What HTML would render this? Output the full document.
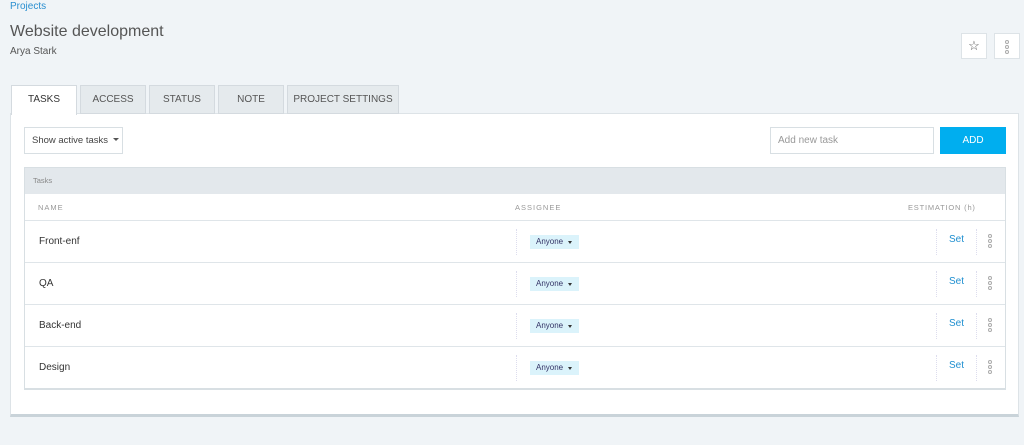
<!DOCTYPE html>
<html><head><style>
*{box-sizing:border-box;margin:0;padding:0}
body{width:1024px;height:445px;background:#f0f4f7;font-family:"Liberation Sans",sans-serif;position:relative;overflow:hidden;color:#444}
.a{position:absolute;white-space:nowrap}
.tab{position:absolute;top:85px;height:29px;background:#e5eaed;border:1px solid #d4dadf;font-size:10px;color:#555;text-align:center;line-height:28px;white-space:nowrap}
.row{position:absolute;left:24px;width:982px;height:42px;border-top:1px solid #dfe5e9;background:#fff}
.row .n{position:absolute;left:14px;top:15px;font-size:10px;color:#333}
.row .d1{position:absolute;left:491px;top:8px;height:26px;border-left:1px dotted #dde}
.row .d2{position:absolute;left:911px;top:8px;height:26px;border-left:1px dotted #dde}
.row .d3{position:absolute;left:951px;top:8px;height:26px;border-left:1px dotted #dde}
.pill{position:absolute;left:505px;top:14px;width:49px;height:14px;background:#dbf3fb;font-size:8px;color:#336;line-height:14px;padding-left:6px}
.pill:after{content:"";position:absolute;right:7px;top:6px;border:2.5px solid transparent;border-top:3px solid #333}
.set{position:absolute;left:924px;top:13px;font-size:10px;color:#1f8fd0}
.dots{position:absolute;left:963px;top:13px;width:4px}
.dots i{display:block;width:4px;height:4px;border:1px solid #aaa;border-radius:50%;margin-bottom:1px}
</style></head><body>
<div class="a" style="left:10px;top:1px;font-size:10px;color:#2a8fd0">Projects</div>
<div class="a" style="left:10px;top:23px;font-size:16px;color:#555">Website development</div>
<div class="a" style="left:10px;top:46px;font-size:10px;color:#555">Arya Stark</div>
<div class="a" style="left:961px;top:33px;width:26px;height:26px;background:#fff;border:1px solid #dde3e7;text-align:center;line-height:24px;font-size:13px;color:#555">☆</div>
<div class="a" style="left:994px;top:33px;width:26px;height:26px;background:#fff;border:1px solid #dde3e7"><div class="dots" style="left:10px;top:6px"><i></i><i></i><i></i></div></div>
<div class="a" style="left:10px;top:113px;width:1009px;height:304px;background:#fff;border:1px solid #dde3e7;border-bottom:3px solid #c9d3d9"></div>
<div class="tab" style="left:11px;width:66px;background:#fff;border-bottom:none;height:30px;color:#333">TASKS</div>
<div class="tab" style="left:80px;width:66px">ACCESS</div>
<div class="tab" style="left:149px;width:66px">STATUS</div>
<div class="tab" style="left:218px;width:66px">NOTE</div>
<div class="tab" style="left:287px;width:112px">PROJECT SETTINGS</div>
<div class="a" style="left:24px;top:127px;width:99px;height:27px;border:1px solid #d8dfe3;background:#fff;font-size:9.5px;color:#444;line-height:25px;padding-left:7px">Show active tasks <span style="display:inline-block;border:3px solid transparent;border-top:3.5px solid #555;vertical-align:-1px;margin-left:2px"></span></div>
<div class="a" style="left:770px;top:127px;width:164px;height:27px;border:1px solid #d8dfe3;background:#fff;font-size:10px;color:#999;line-height:25px;padding-left:7px">Add new task</div>
<div class="a" style="left:940px;top:127px;width:66px;height:27px;background:#00aeef;color:#fff;font-size:10px;text-align:center;line-height:27px">ADD</div>
<div class="a" style="left:24px;top:167px;width:982px;height:223px;border:1px solid #d8dfe3;border-bottom:2px solid #d8dfe3"></div>
<div class="a" style="left:25px;top:168px;width:980px;height:26px;background:#e3e8ec;font-size:7.5px;color:#888;line-height:26px;padding-left:8px">Tasks</div>
<div class="a" style="left:38px;top:203px;font-size:7.5px;color:#999;letter-spacing:1px">NAME</div>
<div class="a" style="left:515px;top:203px;font-size:7.5px;color:#999;letter-spacing:1px">ASSIGNEE</div>
<div class="a" style="left:908px;top:203px;font-size:7.5px;color:#999;letter-spacing:0.8px">ESTIMATION (h)</div>
<div class="row" style="top:220px;left:25px;width:980px"><div class="n">Front-enf</div><div class="d1"></div><div class="pill">Anyone</div><div class="d2"></div><div class="set">Set</div><div class="d3"></div><div class="dots"><i></i><i></i><i></i></div></div>
<div class="row" style="top:262px;left:25px;width:980px"><div class="n">QA</div><div class="d1"></div><div class="pill">Anyone</div><div class="d2"></div><div class="set">Set</div><div class="d3"></div><div class="dots"><i></i><i></i><i></i></div></div>
<div class="row" style="top:304px;left:25px;width:980px"><div class="n">Back-end</div><div class="d1"></div><div class="pill">Anyone</div><div class="d2"></div><div class="set">Set</div><div class="d3"></div><div class="dots"><i></i><i></i><i></i></div></div>
<div class="row" style="top:346px;left:25px;width:980px;height:42px"><div class="n">Design</div><div class="d1"></div><div class="pill">Anyone</div><div class="d2"></div><div class="set">Set</div><div class="d3"></div><div class="dots"><i></i><i></i><i></i></div></div>
</body></html>
